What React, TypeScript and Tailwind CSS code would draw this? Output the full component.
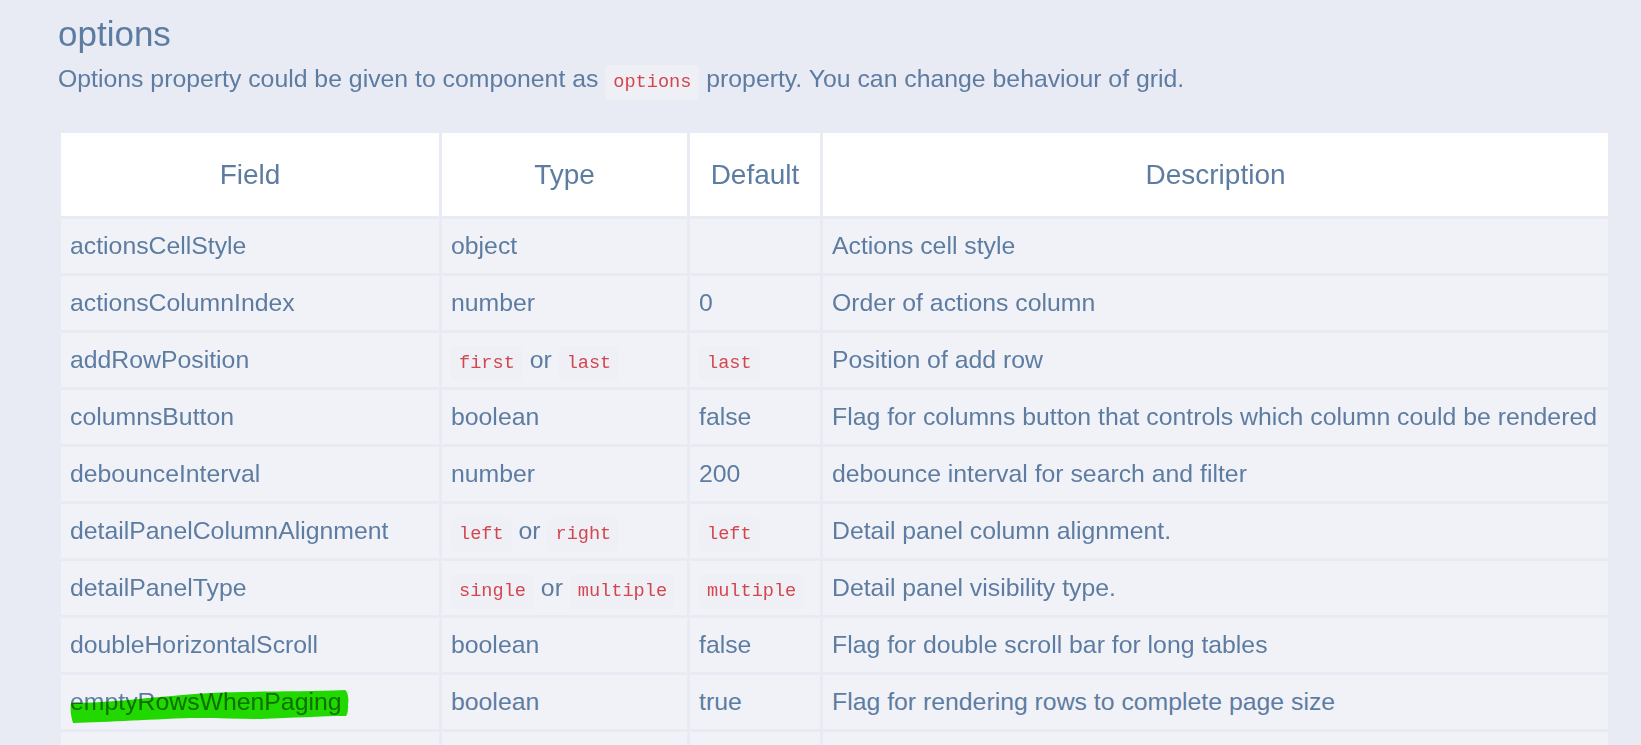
import React from "react";

type Cell = React.ReactNode;

const Code = ({ children }: { children: React.ReactNode }) => (
  <code className="rounded-[5px] bg-[#eef0f6] px-[8px] py-[7px] font-['Liberation_Mono',monospace] text-[18.6px] leading-[20px] text-[#d4464f]">
    {children}
  </code>
);

const rows: [Cell, Cell, Cell, Cell][] = [
  ["actionsCellStyle", "object", "", "Actions cell style"],
  ["actionsColumnIndex", "number", "0", "Order of actions column"],
  [
    "addRowPosition",
    <>
      <Code>first</Code> or <Code>last</Code>
    </>,
    <Code>last</Code>,
    "Position of add row",
  ],
  ["columnsButton", "boolean", "false", "Flag for columns button that controls which column could be rendered"],
  ["debounceInterval", "number", "200", "debounce interval for search and filter"],
  [
    "detailPanelColumnAlignment",
    <>
      <Code>left</Code> or <Code>right</Code>
    </>,
    <Code>left</Code>,
    "Detail panel column alignment.",
  ],
  [
    "detailPanelType",
    <>
      <Code>single</Code> or <Code>multiple</Code>
    </>,
    <Code>multiple</Code>,
    "Detail panel visibility type.",
  ],
  ["doubleHorizontalScroll", "boolean", "false", "Flag for double scroll bar for long tables"],
  ["emptyRowsWhenPaging", "boolean", "true", "Flag for rendering rows to complete page size"],
  ["exportAllData", "boolean", "false", "Flag for export all data instead of loaded data"],
];

export default function App() {
  return (
    <div className="h-[745px] w-full overflow-hidden bg-[#e8eaf4] font-['Liberation_Sans',Arial,sans-serif] text-[#5d7ca2]">
      <div className="pl-[58px] pt-[14px]">
        <h2 className="text-[35px] font-normal leading-[39px]">options</h2>
        <p className="mt-[12px] text-[24.8px] leading-[28px]">
          Options property could be given to component as <Code>options</Code> property. You can change behaviour of grid.
        </p>
        <div className="mt-[37px] grid w-max grid-cols-[378px_245px_130px_785px] gap-[3px] p-[3px]">
          {["Field", "Type", "Default", "Description"].map((h) => (
            <div key={h} className="flex h-[83px] items-center justify-center bg-white text-[28px]">
              {h}
            </div>
          ))}
          {rows.map((r, i) =>
            r.map((c, j) => (
              <div
                key={i + "-" + j}
                className="relative flex h-[54px] items-center whitespace-nowrap bg-[#f1f2f7] px-[9px] text-[24.8px]"
              >
                <span>{c}</span>
                {i === 8 && j === 0 && (
                  <svg
                    className="pointer-events-none absolute left-0 top-0 mix-blend-multiply"
                    width="300"
                    height="54"
                    viewBox="0 0 300 54"
                  >
                    <path
                      d="M10 28 C 25 28, 40 27, 55 26 C 80 24, 115 20, 150 18 C 185 16, 240 17, 284 15 C 287 17, 288 24, 287 30 C 287 35, 287 38, 285 41 C 260 41, 230 43, 200 44 C 170 44, 140 42, 105 44 C 80 45, 60 46, 40 47 C 30 47, 20 48, 12 48 C 10 42, 9 34, 10 28 Z"
                      fill="#22e400"
                    />
                  </svg>
                )}
              </div>
            ))
          )}
        </div>
      </div>
    </div>
  );
}
